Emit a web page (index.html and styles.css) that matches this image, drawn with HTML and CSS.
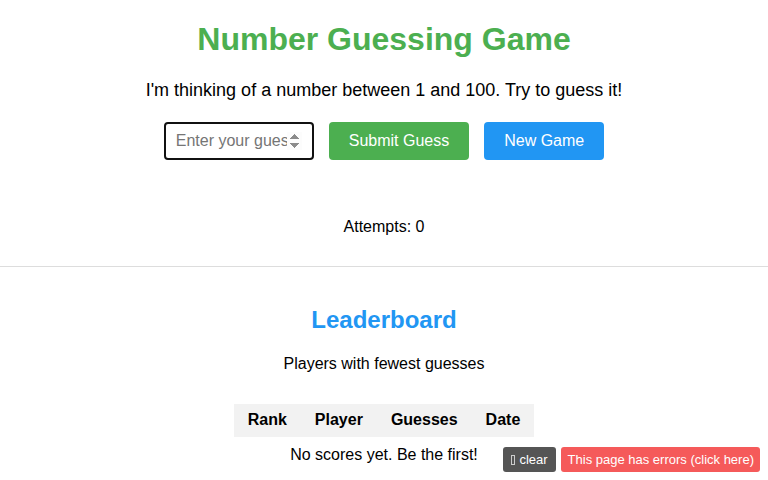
FILE: index.html
```html
<!DOCTYPE html>
<html lang="en">
<head>
<meta charset="utf-8">
<title>Number Guessing Game</title>
<link rel="stylesheet" href="styles.css">
</head>
<body>
<main class="game">
  <h1 class="title">Number Guessing Game</h1>
  <p class="intro">I'm thinking of a number between 1 and 100. Try to guess it!</p>
  <div class="controls">
    <input class="guess-input" type="number" min="1" max="100" placeholder="Enter your guess" autofocus>
    <button class="btn btn-submit">Submit Guess</button>
    <button class="btn btn-new">New Game</button>
  </div>
  <p class="attempts">Attempts: 0</p>
</main>
<hr class="divider">
<section class="leaderboard">
  <h2 class="lb-title">Leaderboard</h2>
  <p class="lb-sub">Players with fewest guesses</p>
  <table class="lb-table">
    <thead>
      <tr><th>Rank</th><th>Player</th><th>Guesses</th><th>Date</th></tr>
    </thead>
    <tbody>
      <tr><td colspan="4" class="empty">No scores yet. Be the first!</td></tr>
    </tbody>
  </table>
</section>
<div class="error-bar">
  <span class="err-clear"><span class="tofu"></span> clear</span>
  <span class="err-msg">This page has errors (click here)</span>
</div>
</body>
</html>
```
FILE: styles.css
```css
html, body {
  margin: 0;
  padding: 0;
  background: #fff;
}
body {
  font-family: "Liberation Sans", Arial, sans-serif;
  color: #000;
  text-align: center;
}
.game {
  padding-top: 21px;
}
.title {
  margin: 0;
  font-size: 32px;
  line-height: 37px;
  color: #4CAF50;
  font-weight: bold;
}
.intro {
  margin: 22px 0 0;
  font-size: 18px;
  line-height: 21px;
}
.controls {
  display: flex;
  justify-content: center;
  gap: 15px;
  margin-top: 21px;
}
.guess-input {
  box-sizing: border-box;
  width: 150px;
  height: 38px;
  padding: 0 10px;
  border: 2px solid #111;
  border-radius: 4px;
  font-family: inherit;
  font-size: 16px;
  outline: none;
}
.guess-input::placeholder {
  color: #757575;
}
.btn {
  height: 38px;
  padding: 0 20px;
  border: none;
  border-radius: 4px;
  color: #fff;
  font-family: inherit;
  font-size: 16px;
  cursor: pointer;
}
.btn-submit {
  background: #4CAF50;
}
.btn-new {
  background: #2196F3;
}
.attempts {
  margin: 58px 0 0;
  font-size: 16px;
  line-height: 18px;
  padding-bottom: 30px;
}
.divider {
  margin: 0;
  border: none;
  border-top: 1px solid #ddd;
}
.leaderboard {
  padding-top: 39px;
}
.lb-title {
  margin: 0;
  font-size: 24px;
  line-height: 28px;
  color: #2196F3;
}
.lb-sub {
  margin: 21px 0 0;
  font-size: 16px;
  line-height: 18px;
}
.lb-table {
  margin: 31px auto 0;
  border-collapse: collapse;
  font-size: 16px;
}
.lb-table th {
  background: #f2f2f2;
  padding: 7px 14px 8px;
  line-height: 18px;
  font-weight: bold;
}
.lb-table td {
  padding: 9px 14px;
  line-height: 18px;
}
.error-bar {
  position: fixed;
  right: 8px;
  bottom: 8px;
  display: flex;
  gap: 5px;
  font-size: 13px;
}
.err-clear, .err-msg {
  display: inline-flex;
  align-items: center;
  height: 25px;
  border-radius: 3px;
  color: #fff;
  box-sizing: border-box;
}
.err-clear {
  background: #555;
  gap: 4px;
  padding: 0 8px;
}
.err-msg {
  background: #f55a5a;
  padding: 0 6px 0 7px;
}
.tofu {
  display: inline-block;
  width: 2px;
  height: 8px;
  border: 1px solid #ccc;
}
```
